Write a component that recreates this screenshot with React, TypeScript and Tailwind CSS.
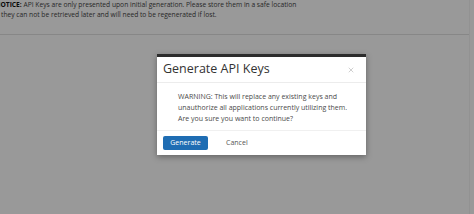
import { X } from 'lucide-react';

const font = { fontFamily: '"Open Sans", "Liberation Sans", sans-serif' };

export default function App() {
  return (
    <div className="relative h-[214px] w-[474px] overflow-hidden bg-white" style={font}>
      <div className="h-[214px] w-[470px] border-r border-[#f4f4f4]">
        <div className="h-[35px] border-b border-[#e2e2e2] text-[6.7px] leading-[10px] text-[#444]">
          <p className="-ml-[5px] whitespace-nowrap">
            <b className="text-[#111]">NOTICE:</b> API Keys are only presented upon initial generation. Please store them in a safe location
          </p>
          <p className="ml-[1px] whitespace-nowrap">they can not be retrieved later and will need to be regenerated if lost.</p>
        </div>
      </div>

      <div className="absolute inset-0 bg-black/40" />

      <div className="absolute left-[157px] top-[54px] w-[209px] border-t-[3px] border-[#2c2c2c] bg-white shadow-[0_2px_6px_rgba(0,0,0,0.35)]">
        <div className="flex h-[26px] items-center justify-between border-b border-[#ececec] pl-[6px] pr-[11px]">
          <span className="text-[12.5px] text-[#333]">Generate API Keys</span>
          <X size={8} strokeWidth={2.4} className="text-[#c4c4c4]" />
        </div>
        <div className="pb-[6px] pl-[21px] pr-[8px] pt-[8px] text-[7px] leading-[11px] text-[#4a4a4a]">
          <p className="whitespace-nowrap">WARNING: This will replace any existing keys and</p>
          <p className="whitespace-nowrap">unauthorize all applications currently utilizing them.</p>
          <p className="whitespace-nowrap">Are you sure you want to continue?</p>
        </div>
        <div className="flex items-center gap-[18px] border-t border-[#f0f0f0] px-[6px] py-[5px]">
          <button className="h-[14px] w-[45px] rounded-[2px] bg-[#1f6db3] text-[7px] leading-[14px] text-white">
            Generate
          </button>
          <span className="text-[7px] text-[#555]">Cancel</span>
        </div>
      </div>
    </div>
  );
}
